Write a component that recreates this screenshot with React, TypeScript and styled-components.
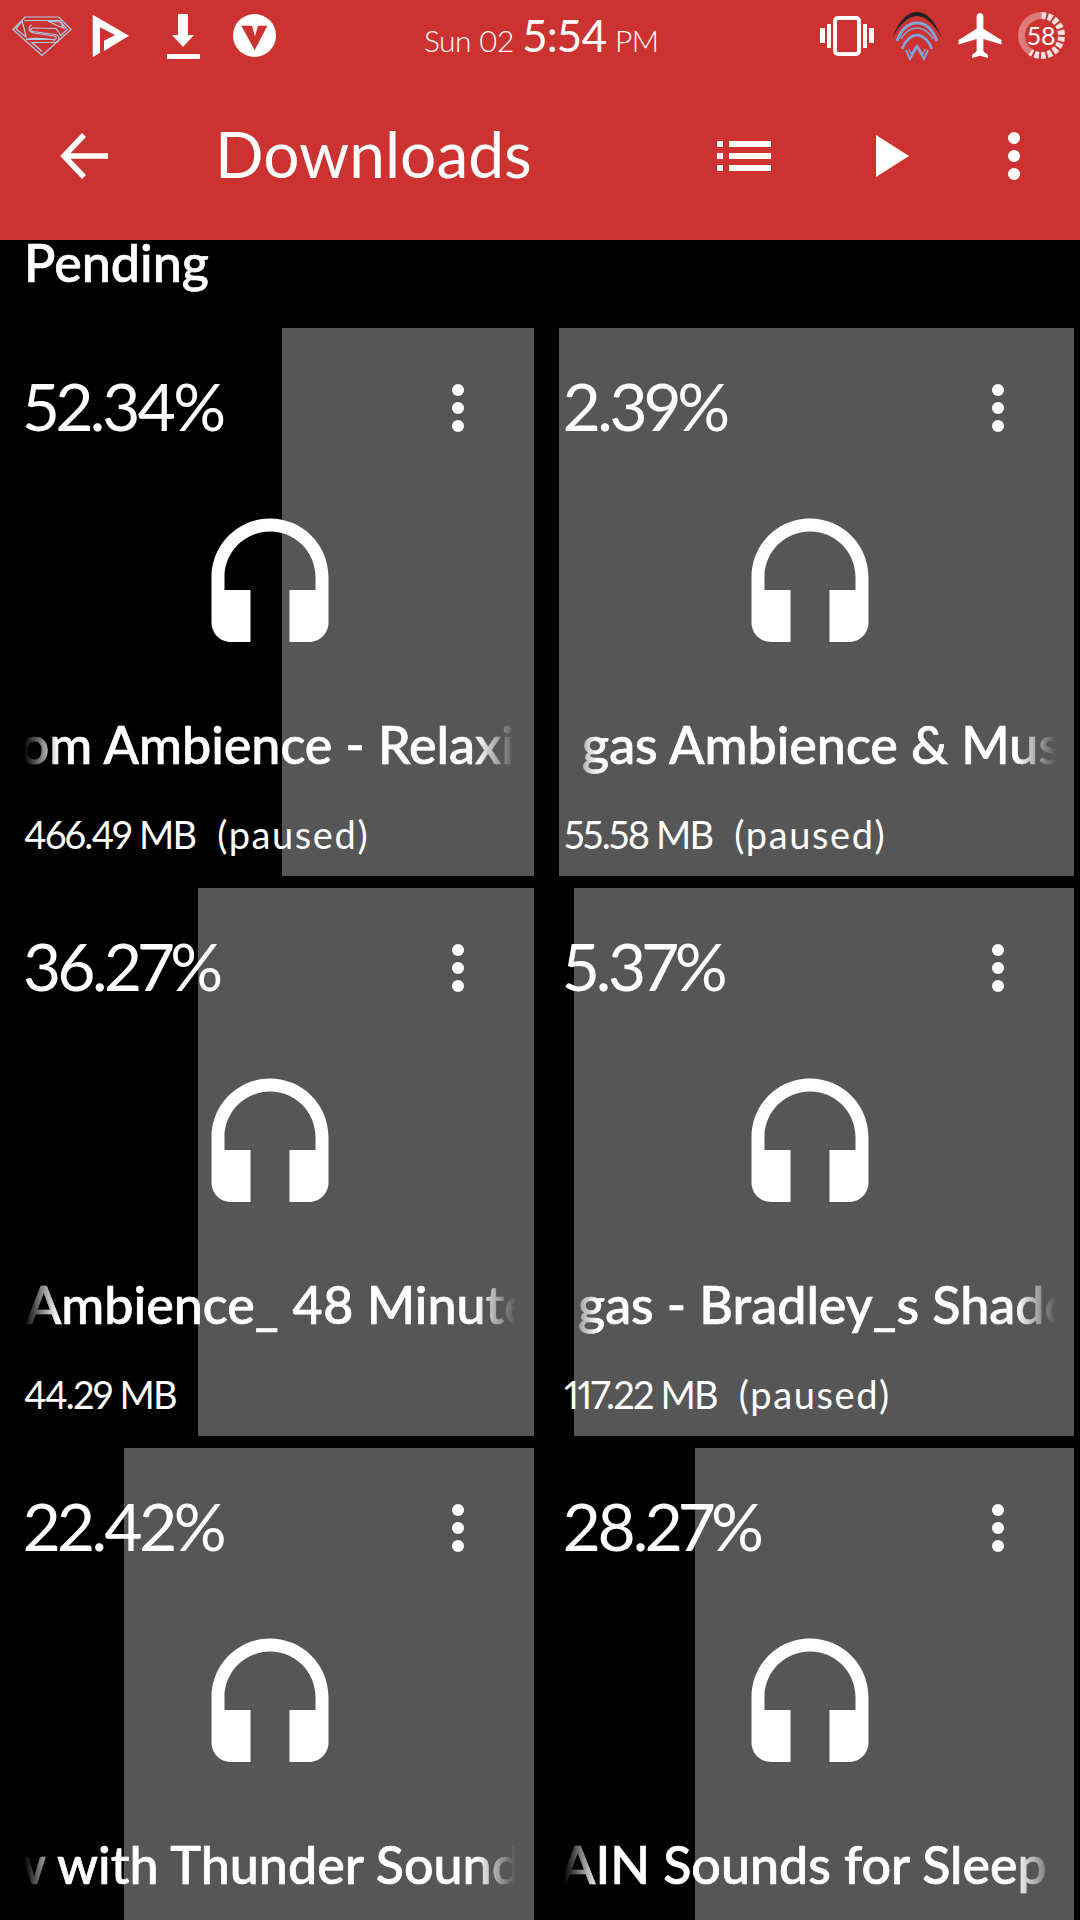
import React from "react";
import styled, { createGlobalStyle } from "styled-components";

const GlobalStyle = createGlobalStyle`
  html, body {
    margin: 0;
    padding: 0;
    background: #000;
  }
  * {
    box-sizing: border-box;
  }
`;

const Screen = styled.div`
  width: 1080px;
  height: 1920px;
  overflow: hidden;
  background: #000;
  color: #fff;
  font-family: "Lato", "Open Sans", sans-serif;
  font-variant-numeric: proportional-nums;
`;

const Header = styled.header`
  height: 240px;
  background: #cc3330;
`;

const StatusBar = styled.div`
  height: 72px;
  display: flex;
  align-items: flex-start;
  padding-left: 12px;
`;

const LeftIcons = styled.div`
  width: 264px;
  height: 72px;
  display: flex;
  align-items: flex-start;
`;

const StatusIcon = styled.svg<{ $left: number; $top: number }>`
  flex: none;
  display: block;
  margin-left: ${p => p.$left}px;
  margin-top: ${p => p.$top}px;
`;

const Clock = styled.div`
  margin-left: 148px;
  width: 232px;
  height: 72px;
  display: flex;
  align-items: baseline;
  font-weight: 300;
  white-space: nowrap;
  line-height: 70px;
`;

const ClockSmall = styled.span<{ $width: number }>`
  font-size: 30px;
  display: inline-block;
  width: ${p => p.$width}px;
  letter-spacing: -0.6px;
`;

const ClockTime = styled.span`
  font-size: 44px;
  font-weight: 400;
  display: inline-block;
  width: 92px;
  letter-spacing: -0.2px;
`;

const RightIcons = styled.div`
  margin-left: 164px;
  height: 72px;
  display: flex;
  align-items: flex-start;
`;

const BatteryWrap = styled.div`
  position: relative;
  flex: none;
  width: 47px;
  height: 47px;
  margin-left: 16px;
  margin-top: 12px;
`;

const BatteryText = styled.span`
  position: absolute;
  left: 0;
  right: 0;
  top: 0;
  line-height: 46px;
  text-align: center;
  font-size: 25px;
  font-weight: 400;
`;

const Toolbar = styled.div`
  height: 168px;
  display: flex;
  align-items: center;
`;

const ToolIcon = styled.svg<{ $left: number }>`
  flex: none;
  display: block;
  margin-left: ${p => p.$left}px;
`;

const Title = styled.h1`
  margin: -4px 0 0 107px;
  width: 501px;
  font-size: 64px;
  font-weight: 400;
  line-height: 76px;
  white-space: nowrap;
`;

const SectionLabel = styled.div`
  height: 88px;
  padding-left: 24px;
  font-size: 52px;
  font-weight: 500;
  line-height: 44px;
  -webkit-text-stroke: 0.7px #fff;
`;

const Grid = styled.div`
  display: grid;
  grid-template-columns: 528px 528px;
  grid-auto-rows: 548px;
  gap: 12px;
  padding: 0 6px;
`;

const Card = styled.article`
  position: relative;
  background: #565656;
  padding: 40px 18px 0;
  overflow: hidden;
`;

const Progress = styled.div`
  position: absolute;
  left: 0;
  top: 0;
  bottom: 0;
  background: #000;
`;

const CardBody = styled.div`
  position: relative;
`;

const CardTop = styled.div`
  height: 80px;
  padding-right: 52px;
  display: flex;
  align-items: center;
  justify-content: space-between;
`;

const Percent = styled.span`
  margin-left: -1px;
  margin-top: -4px;
  font-size: 66px;
  font-weight: 400;
  line-height: 80px;
  letter-spacing: -3.2px;
`;

const IconSlot = styled.div`
  margin: 64px -18px 0;
  height: 156px;
  display: flex;
  justify-content: center;
`;

const Marquee = styled.div`
  margin-top: 46px;
  width: 492px;
  height: 60px;
  overflow: hidden;
  mask-image: linear-gradient(to right, transparent 0, #000 34px, #000 452px, transparent 100%);
`;

const MarqueeText = styled.div<{ $offset: number }>`
  margin-left: ${p => p.$offset}px;
  font-size: 52px;
  font-weight: 500;
  line-height: 60px;
  white-space: pre;
  -webkit-text-stroke: 0.7px #fff;
`;

const SizeLine = styled.div`
  margin-top: 38px;
  height: 44px;
  display: flex;
  gap: 22px;
  font-size: 38px;
  font-weight: 400;
  line-height: 44px;
  white-space: pre;
`;

const SizeValue = styled.span`
  letter-spacing: -1.8px;
`;

const SizeState = styled.span`
  letter-spacing: 1.6px;
`;

const Dots: React.FC = () => (
  <svg width="12" height="48" viewBox="0 0 12 48" fill="#fff">
    <circle cx="6" cy="6" r="6" />
    <circle cx="6" cy="24" r="6" />
    <circle cx="6" cy="42" r="6" />
  </svg>
);

const Headset: React.FC = () => (
  <svg width="156" height="156" viewBox="0 0 24 24" fill="#fff">
    <path d="M12 1c-4.97 0-9 4.03-9 9v7c0 1.66 1.34 3 3 3h3v-8H5v-2c0-3.87 3.13-7 7-7s7 3.13 7 7v2h-4v8h3c1.66 0 3-1.34 3-3v-7c0-4.97-4.03-9-9-9z" />
  </svg>
);

interface IDownload {
  percent: number;
  title: string;
  offset: number;
  size: string;
  paused: boolean;
}

const downloads: IDownload[] = [
  { percent: 52.34, title: "Room Ambience - Relaxing", offset: -65, size: "466.49 MB", paused: true },
  { percent: 2.39, title: "gas Ambience & Music", offset: 18, size: "55.58 MB", paused: true },
  { percent: 36.27, title: "Ambience_ 48 Minutes", offset: 2, size: "44.29 MB", paused: false },
  { percent: 5.37, title: "gas - Bradley_s Shadow", offset: 14, size: "117.22 MB", paused: true },
  { percent: 22.42, title: "w with Thunder Sounds", offset: -19, size: "", paused: false },
  { percent: 28.27, title: "AIN Sounds for Sleep", offset: -4, size: "", paused: false },
];

const App: React.FC = () => (
  <Screen>
    <GlobalStyle />
    <Header>
      <StatusBar>
        <LeftIcons>
          <StatusIcon $left={0} $top={16} width="60" height="40" viewBox="0 0 60 40" fill="none" stroke="#a9d0ee" strokeWidth="1.2">
            <path d="M13 1h34l12 12.5L30 39.5 1 13.5z" />
            <path d="M12 4.5h36l7 9-6 6-5-7-23-.5c-3 0-3 3 0 3.5l22 3c6 1 5 8-1 8H20l10 9" />
            <path d="M10 5L4 13l10 8-2-9z" />
            <path d="M20 9c-4 1-4 7 2 8l20 3c3 .5 3 3 0 3.5H14c6-2 24-1 29 1" />
            <path d="M36 5l12 1 4 6-8-3z" />
          </StatusIcon>
          <StatusIcon $left={20} $top={14} width="38" height="44" viewBox="0 0 38 44" fill="#fff">
            <polygon points="0.7,0.7 37,21.7 12,37 12,26.7 23,21 8,13.3 8,38.7 0.7,43.3" />
          </StatusIcon>
          <StatusIcon $left={37} $top={14} width="33" height="45" viewBox="0 0 33 45" fill="#fff">
            <path d="M11 0h10v21h6L16 33 5 21h6zM0 40h33v5H0z" />
          </StatusIcon>
          <StatusIcon $left={33} $top={14} width="43" height="43" viewBox="0 0 43 43">
            <circle cx="21.5" cy="21.5" r="21.5" fill="#fff" />
            <path d="M8.3 11.7H19l3 10.5 3-10.5h9.3L21.7 36.3z" fill="#cc3330" />
          </StatusIcon>
        </LeftIcons>
        <Clock>
          <ClockSmall $width={99}>Sun 02</ClockSmall>
          <ClockTime>5:54</ClockTime>
          <ClockSmall $width={40}>PM</ClockSmall>
        </Clock>
        <RightIcons>
          <StatusIcon $left={0} $top={16} width="54" height="40" viewBox="0 0 54 40" fill="#fff">
            <rect x="15" y="2" width="24" height="36" rx="3" fill="none" stroke="#fff" strokeWidth="4" />
            <rect x="0" y="12" width="5" height="15" />
            <rect x="7" y="8" width="4" height="24" />
            <rect x="43" y="8" width="4" height="24" />
            <rect x="49" y="12" width="5" height="15" />
          </StatusIcon>
          <StatusIcon $left={18} $top={10} width="50" height="51" viewBox="0 0 50 51" fill="none">
            <path d="M.5 28C6 12 15 2 25 2s19 10 24.500 26C43 15 34 6 25 6S7 15 .5 28z" fill="#222" />
            <path d="M5 31C9 20 16 13 25 13s16 7 20 18" stroke="#7fa6de" strokeWidth="3" />
            <path d="M9 29C13 22 18 18 25 18s12 4 16 11" stroke="#7fa6de" strokeWidth="1.5" />
            <path d="M10 39C13 31 19 25 25 25s12 6 15 14" stroke="#7fa6de" strokeWidth="2.5" />
            <path d="M14 40l4 9 7-12 7 12 4-9" stroke="#7fa6de" strokeWidth="2" />
            <path d="M17 39l2 5 6-9 6 9 2-5" stroke="#7fa6de" strokeWidth="1.2" />
          </StatusIcon>
          <StatusIcon $left={16} $top={13} width="44" height="45" viewBox="2 2 19 20" fill="#fff">
            <path d="M21 16v-2l-8-5V3.500c0-.83-.67-1.500-1.500-1.500S10 2.670 10 3.500V9l-8 5v2l8-2.500V19l-2 1.500V22l3.500-1 3.500 1v-1.500L13 19v-5.500l8 2.500z" />
          </StatusIcon>
          <BatteryWrap>
            <svg width="47" height="47" viewBox="0 0 47 47" fill="none">
              <circle cx="23.5" cy="23.500" r="20" stroke="#fff" strokeOpacity="0.35" strokeWidth="7" pathLength="100" strokeDasharray="42 58" strokeDashoffset="-58" transform="rotate(-90 23.5 23.5)" />
              <path d="M23.500 3.500A20 20 0 1 1 12.500 40.200" stroke="#fff" strokeOpacity="0.85" strokeWidth="7" strokeDasharray="4.500 2" />
            </svg>
            <BatteryText>58</BatteryText>
          </BatteryWrap>
        </RightIcons>
      </StatusBar>
      <Toolbar>
        <ToolIcon $left={60} width="48" height="48" viewBox="0 0 48 48" fill="none" stroke="#fff" strokeWidth="5.500">
          <path d="M48 24H4M24 3L4 24l20 21" strokeLinejoin="miter" />
        </ToolIcon>
        <Title>Downloads</Title>
        <ToolIcon $left={1} width="54" height="30" viewBox="0 0 54 30" fill="#fff">
          <path d="M0 0h6v6H0zM12 0h42v6H12zM0 12h6v6H0zM12 12h42v6H12zM0 24h6v6H0zM12 24h42v6H12z" />
        </ToolIcon>
        <ToolIcon $left={105} width="33" height="42" viewBox="0 0 33 42" fill="#fff">
          <polygon points="0,0 33,21 0,42" />
        </ToolIcon>
        <ToolIcon $left={99} width="12" height="48" viewBox="0 0 12 48" fill="#fff">
          <circle cx="6" cy="6" r="6" />
          <circle cx="6" cy="24" r="6" />
          <circle cx="6" cy="42" r="6" />
        </ToolIcon>
      </Toolbar>
    </Header>
    <SectionLabel>Pending</SectionLabel>
    <Grid>
      {downloads.map(d => (
        <Card key={d.title}>
          <Progress style={{ width: `${d.percent}%` }} />
          <CardBody>
            <CardTop>
              <Percent>{d.percent.toFixed(2)}%</Percent>
              <Dots />
            </CardTop>
            <IconSlot>
              <Headset />
            </IconSlot>
            <Marquee>
              <MarqueeText $offset={d.offset}>{d.title}</MarqueeText>
            </Marquee>
            <SizeLine>
              <SizeValue>{d.size}</SizeValue>
              {d.paused && <SizeState>(paused)</SizeState>}
            </SizeLine>
          </CardBody>
        </Card>
      ))}
    </Grid>
  </Screen>
);

export default App;
